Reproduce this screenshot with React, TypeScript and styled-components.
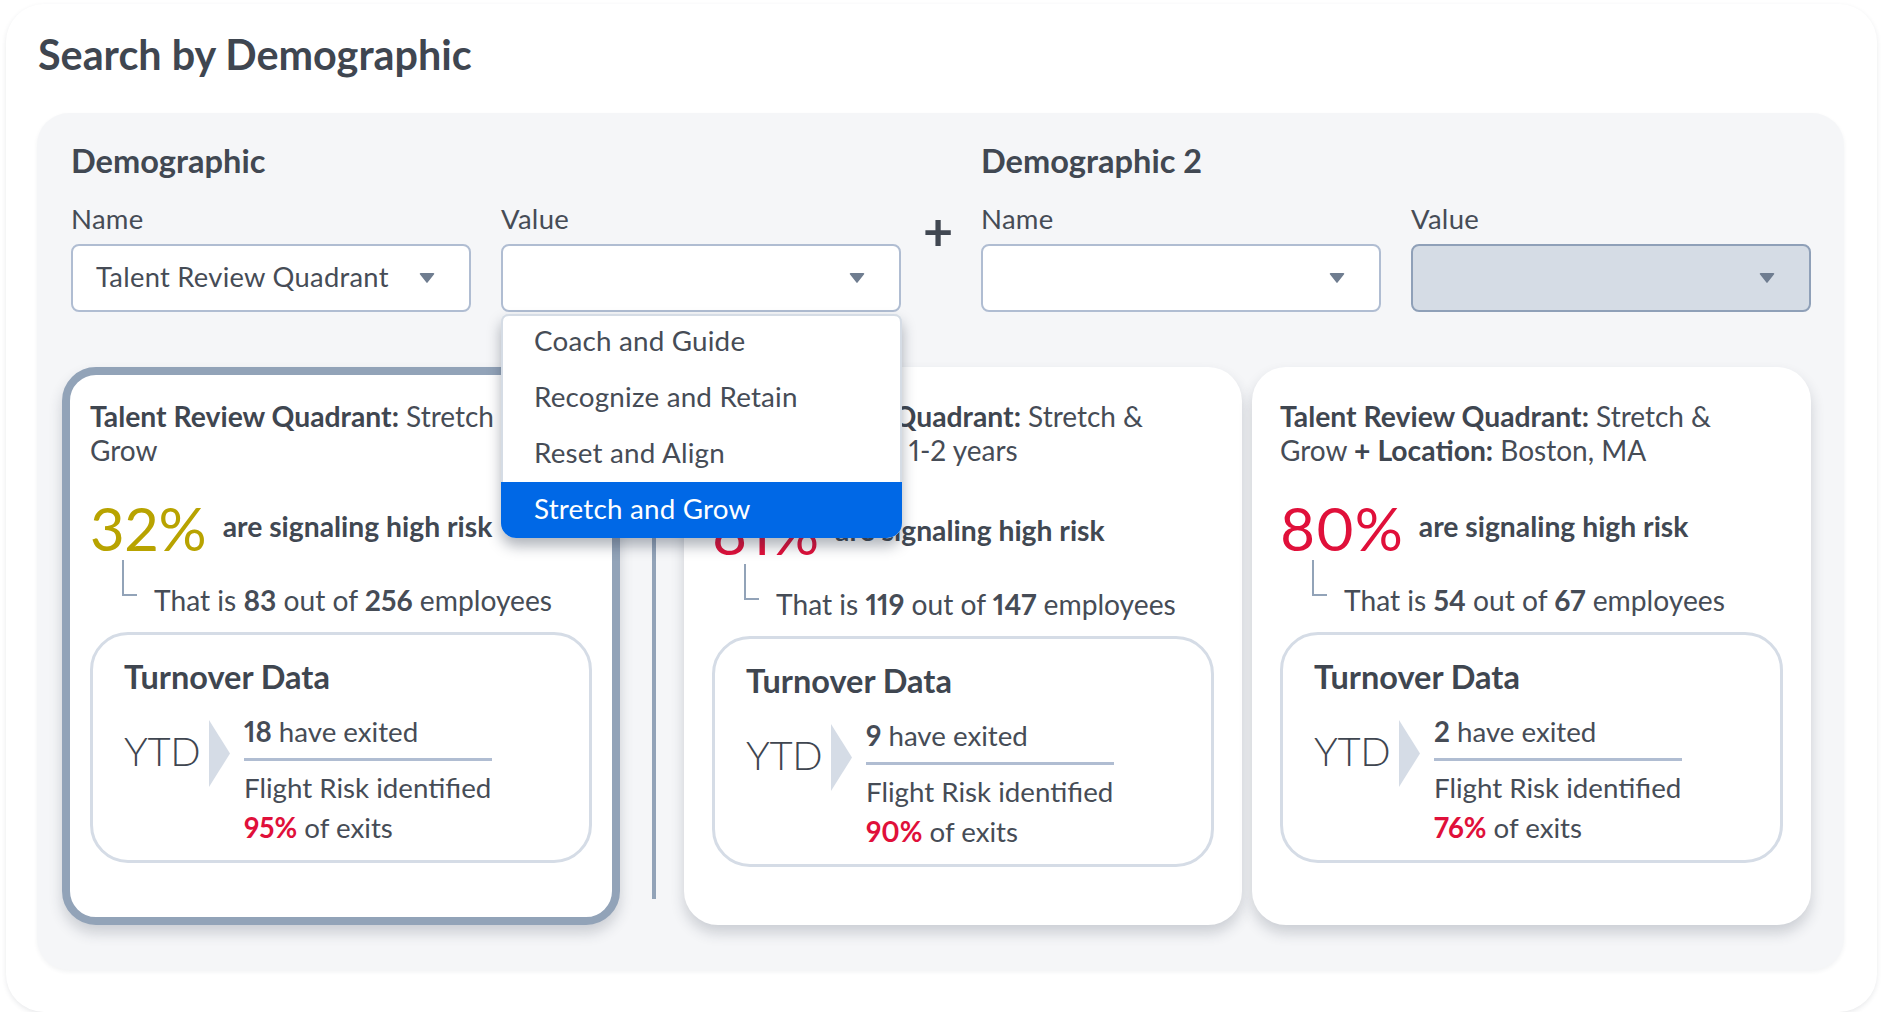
import React from 'react';
import styled, { createGlobalStyle } from 'styled-components';

const GlobalStyle = createGlobalStyle`
  html, body {
    margin: 0;
    padding: 0;
    background: #ffffff;
    font-family: "Lato", "Open Sans", sans-serif;
    font-variant-numeric: proportional-nums;
    color: #464c56;
  }
  * {
    box-sizing: border-box;
  }
`;

const OuterCard = styled.div`
  width: 1871px;
  height: 1008px;
  margin: 4px 0 0 6px;
  padding: 0 31px;
  background: #ffffff;
  border-radius: 38px;
  box-shadow: 0 2px 5px rgba(40, 50, 70, 0.1);
`;

const PageTitle = styled.h1`
  margin: 0;
  height: 109px;
  padding: 27px 0 0 1px;
  font-size: 41.3px;
  line-height: 46px;
  font-weight: 700;
  color: #3f4650;
`;

const Panel = styled.div`
  width: 1807px;
  height: 857px;
  padding: 0 33px 0 25px;
  background: #f5f6f8;
  border-radius: 32px;
  box-shadow: 0 2px 4px rgba(40, 50, 70, 0.06);
`;

const FilterRow = styled.div`
  display: flex;
  height: 199px;
  padding-left: 9px;
`;

const FilterGroup = styled.div`
  width: 830px;
  padding-top: 28px;
`;

const GroupTitle = styled.h2`
  margin: 0;
  height: 40px;
  font-size: 32.6px;
  line-height: 40px;
  font-weight: 700;
  color: #414852;
`;

const FieldGrid = styled.div`
  display: grid;
  grid-template-columns: 400px 400px;
  column-gap: 30px;
  margin-top: 21px;
`;

const Field = styled.div`
  position: relative;
`;

const FieldLabel = styled.div`
  height: 42px;
  font-size: 27.5px;
  line-height: 34px;
  letter-spacing: 0.3px;
`;

const SelectBox = styled.div<{ $disabled?: boolean }>`
  display: flex;
  align-items: center;
  justify-content: space-between;
  height: 68px;
  padding: 0 34px 3px 23px;
  font-size: 27.3px;
  letter-spacing: 0.3px;
  background: ${(p) => (p.$disabled ? '#d5dce5' : '#ffffff')};
  border: 2px solid ${(p) => (p.$disabled ? '#8fa0b8' : '#b0bdd2')};
  border-radius: 8px;
`;

const CaretIcon = styled.svg`
  flex: none;
  margin-top: 3px;
`;

const Menu = styled.div`
  position: absolute;
  top: 112px;
  left: 0;
  z-index: 5;
  width: 401px;
  height: 224px;
  overflow: hidden;
  background: #ffffff;
  border-radius: 8px 8px 15px 15px;
  box-shadow: inset 0 2px 0 #d5dce5, inset 2px 0 0 #d5dce5, inset -2px 0 0 #d5dce5,
    0 8px 14px rgba(30, 40, 60, 0.35);
`;

const MenuItem = styled.div<{ $active?: boolean }>`
  height: 56px;
  padding-left: 33px;
  font-size: 27.8px;
  line-height: 54px;
  letter-spacing: 0.2px;
  color: ${(p) => (p.$active ? '#ffffff' : '#464c56')};
  background: ${(p) => (p.$active ? '#0068e6' : 'transparent')};
`;

const PlusSign = styled.div`
  width: 80px;
  padding-top: 87px;
  font-size: 52px;
  line-height: 60px;
  font-weight: 700;
  text-align: center;
  color: #414852;
  transform: translateX(-3px);
`;

const CardRow = styled.div`
  display: flex;
  align-items: flex-start;
  margin-top: 55px;
`;

const Card = styled.div<{ $selected?: boolean; $wide?: boolean }>`
  width: ${(p) => (p.$wide ? '559px' : '558px')};
  height: 558px;
  padding: ${(p) => (p.$selected ? '24px 20px' : '32px 28px')};
  background: #ffffff;
  border: ${(p) => (p.$selected ? '8px solid #92a3b8' : 'none')};
  border-radius: 34px;
  box-shadow: 0 8px 14px rgba(40, 50, 70, 0.2);
`;

const Divider = styled.div`
  width: 4px;
  height: 532px;
  margin: 0 28px 0 32px;
  background: #92a3b8;
`;

const CardGap = styled.div`
  width: 10px;
`;

const CardHeading = styled.div`
  max-width: 460px;
  height: 68px;
  font-size: 28px;
  line-height: 34px;
  strong {
    font-weight: 700;
    font-size: 28.3px;
    color: #3f4650;
  }
`;

const StatRow = styled.div<{ $shift: number }>`
  display: flex;
  align-items: center;
  height: 64px;
  margin-top: ${(p) => 29 + p.$shift}px;
`;

const StatValue = styled.div<{ $color: string }>`
  font-size: 60px;
  line-height: 64px;
  font-weight: 400;
  color: ${(p) => p.$color};
`;

const StatLabel = styled.div`
  margin: 0 0 4px 16px;
  font-size: 28.3px;
  font-weight: 700;
  color: #414852;
`;

const CountRow = styled.div`
  display: flex;
  align-items: flex-start;
  padding-left: 32px;
`;

const Connector = styled.div`
  width: 15px;
  height: 36px;
  border-left: 2px solid #92a3b8;
  border-bottom: 2px solid #92a3b8;
`;

const CountText = styled.div`
  margin: 23px 0 0 17px;
  font-size: 28.2px;
  line-height: 34px;
  strong {
    font-weight: 700;
  }
`;

const TurnoverBox = styled.div`
  height: 231px;
  margin-top: 15px;
  padding: 24px 31px 0;
  border: 3px solid #d5dce6;
  border-radius: 38px;
`;

const TurnoverTitle = styled.div`
  font-size: 32.5px;
  line-height: 36px;
  font-weight: 700;
  color: #3f4650;
`;

const TurnoverRow = styled.div`
  display: flex;
  align-items: flex-start;
  margin-top: 25px;
`;

const YtdLabel = styled.div`
  width: 85px;
  padding-bottom: 4px;
  font-size: 40px;
  line-height: 63px;
  letter-spacing: -0.4px;
  font-weight: 300;
  color: #3f4650;
`;

const Chevron = styled.svg`
  flex: none;
  margin-right: 14px;
`;

const Details = styled.div`
  width: 248px;
  font-size: 27.7px;
  white-space: nowrap;
  strong {
    font-weight: 700;
  }
`;

const ExitLine = styled.div`
  height: 38px;
  line-height: 24px;
`;

const Rule = styled.div`
  height: 3px;
  margin-bottom: 10px;
  background: #b0bdd2;
`;

const DetailLine = styled.div`
  height: 40px;
  line-height: 34px;
`;

const RedPct = styled.strong`
  color: #e0103a;
`;

const Caret = () => (
  <CaretIcon width="16" height="12" viewBox="0 0 16 12">
    <path d="M1.5 1h13a.8.8 0 0 1 .6 1.3L8.6 10.6a.8.8 0 0 1-1.2 0L.9 2.3A.8.8 0 0 1 1.5 1z" fill="#6f7d90" />
  </CaretIcon>
);

const menuOptions = ['Coach and Guide', 'Recognize and Retain', 'Reset and Align', 'Stretch and Grow'];

interface Result {
  selected?: boolean;
  wide?: boolean;
  heading: React.ReactNode;
  pct: string;
  color: string;
  shift: number;
  count: string;
  total: string;
  exited: string;
  flight: string;
}

const results: Result[] = [
  {
    selected: true,
    heading: (
      <>
        <strong>Talent Review Quadrant:</strong> Stretch &amp; Grow
      </>
    ),
    pct: '32%',
    color: '#b8a300',
    shift: 0,
    count: '83',
    total: '256',
    exited: '18',
    flight: '95%',
  },
  {
    heading: (
      <>
        <strong>Talent Review Quadrant:</strong> Stretch &amp; Grow <strong>+ Tenure:</strong> 1-2 years
      </>
    ),
    pct: '81%',
    color: '#e0103a',
    shift: 4,
    count: '119',
    total: '147',
    exited: '9',
    flight: '90%',
  },
  {
    wide: true,
    heading: (
      <>
        <strong>Talent Review Quadrant:</strong> Stretch &amp; Grow <strong>+ Location:</strong> Boston, MA
      </>
    ),
    pct: '80%',
    color: '#e0103a',
    shift: 0,
    count: '54',
    total: '67',
    exited: '2',
    flight: '76%',
  },
];

const ResultCard = ({ r }: { r: Result }) => (
  <Card $selected={r.selected} $wide={r.wide}>
    <CardHeading>{r.heading}</CardHeading>
    <StatRow $shift={r.shift}>
      <StatValue $color={r.color}>{r.pct}</StatValue>
      <StatLabel>are signaling high risk</StatLabel>
    </StatRow>
    <CountRow>
      <Connector />
      <CountText>
        That is <strong>{r.count}</strong> out of <strong>{r.total}</strong> employees
      </CountText>
    </CountRow>
    <TurnoverBox>
      <TurnoverTitle>Turnover Data</TurnoverTitle>
      <TurnoverRow>
        <YtdLabel>YTD</YtdLabel>
        <Chevron width="21" height="67" viewBox="0 0 21 67">
          <polygon points="0,0 21,33.5 0,67" fill="#d5dce6" />
        </Chevron>
        <Details>
          <ExitLine>
            <strong>{r.exited}</strong> have exited
          </ExitLine>
          <Rule />
          <DetailLine>Flight Risk identified</DetailLine>
          <DetailLine>
            <RedPct>{r.flight}</RedPct> of exits
          </DetailLine>
        </Details>
      </TurnoverRow>
    </TurnoverBox>
  </Card>
);

export default function App() {
  return (
    <>
      <GlobalStyle />
      <OuterCard>
        <PageTitle>Search by Demographic</PageTitle>
        <Panel>
          <FilterRow>
            <FilterGroup>
              <GroupTitle>Demographic</GroupTitle>
              <FieldGrid>
                <Field>
                  <FieldLabel>Name</FieldLabel>
                  <SelectBox>
                    Talent Review Quadrant
                    <Caret />
                  </SelectBox>
                </Field>
                <Field>
                  <FieldLabel>Value</FieldLabel>
                  <SelectBox>
                    <span />
                    <Caret />
                  </SelectBox>
                  <Menu>
                    {menuOptions.map((opt, i) => (
                      <MenuItem key={opt} $active={i === menuOptions.length - 1}>
                        {opt}
                      </MenuItem>
                    ))}
                  </Menu>
                </Field>
              </FieldGrid>
            </FilterGroup>
            <PlusSign>+</PlusSign>
            <FilterGroup>
              <GroupTitle>Demographic 2</GroupTitle>
              <FieldGrid>
                <Field>
                  <FieldLabel>Name</FieldLabel>
                  <SelectBox>
                    <span />
                    <Caret />
                  </SelectBox>
                </Field>
                <Field>
                  <FieldLabel>Value</FieldLabel>
                  <SelectBox $disabled>
                    <span />
                    <Caret />
                  </SelectBox>
                </Field>
              </FieldGrid>
            </FilterGroup>
          </FilterRow>
          <CardRow>
            <ResultCard r={results[0]} />
            <Divider />
            <ResultCard r={results[1]} />
            <CardGap />
            <ResultCard r={results[2]} />
          </CardRow>
        </Panel>
      </OuterCard>
    </>
  );
}
